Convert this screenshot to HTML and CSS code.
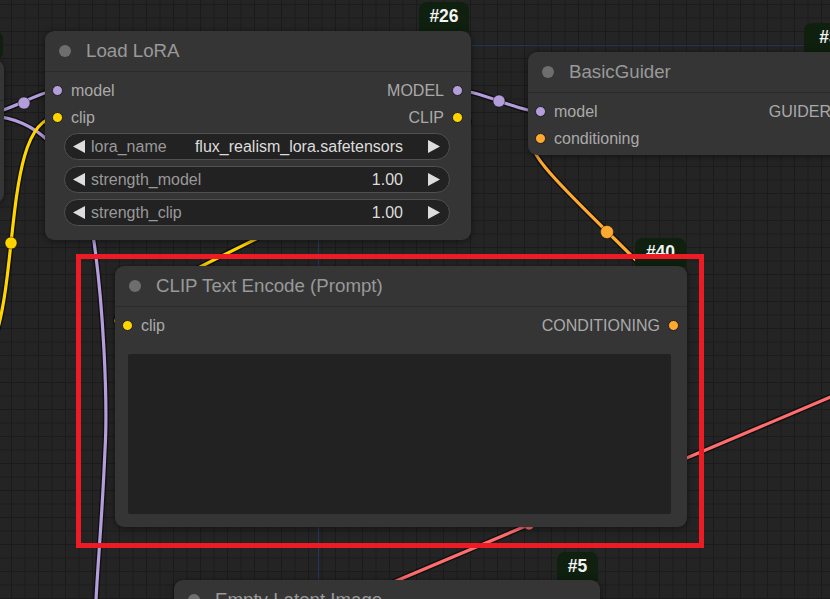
FILE: index.html
```html
<!DOCTYPE html>
<html lang="en">
<head>
    <meta charset="UTF-8">
    <meta name="viewport" content="width=device-width, initial-scale=1.0">
    <title>Workflow canvas</title>
    <link rel="stylesheet" href="styles.css">
</head>
<body>

<div class="canvas">

    <!-- links sit under the nodes -->
    <svg class="links" width="830" height="599" viewBox="0 0 830 599">
        <defs>
            <path id="l-model-in" d="M -10 113 C 7 113, 41 90, 58 90"/>
            <path id="l-model-down" d="M -10 116 C 40 118, 80 160, 93 235 C 103 300, 108 400, 105 450 C 102 520, 98 560, 96 600"/>
            <path id="l-model-guider" d="M 457 90 C 479 90, 519 112, 541 112"/>
            <path id="l-clip-in" d="M -36 369 C 31 369, -9 117, 58 117"/>
            <path id="l-clip-enc" d="M 457 117 C 554 117, 31 325, 128 325"/>
            <path id="l-cond" d="M 674 325 C 731 325, 484 139, 541 139"/>
            <path id="l-vae" d="M 845 391 L 370 592"/>
        </defs>

        <line class="group-edge" x1="470" y1="45.5" x2="806" y2="45.5"/>
        <line class="group-edge" x1="318.5" y1="238" x2="318.5" y2="582"/>

        <g class="link-shadow">
            <use href="#l-model-in"/>
            <use href="#l-model-down"/>
            <use href="#l-model-guider"/>
            <use href="#l-clip-in"/>
            <use href="#l-clip-enc"/>
            <use href="#l-cond"/>
            <use href="#l-vae"/>
        </g>
        <g class="link model">
            <use href="#l-model-in"/>
            <use href="#l-model-down"/>
            <use href="#l-model-guider"/>
        </g>
        <g class="link clip">
            <use href="#l-clip-in"/>
            <use href="#l-clip-enc"/>
        </g>
        <g class="link cond"><use href="#l-cond"/></g>
        <g class="link vae"><use href="#l-vae"/></g>

        <circle class="mid model" cx="24" cy="103" r="6"/>
        <circle class="mid model" cx="499" cy="101" r="6"/>
        <circle class="mid clip" cx="11" cy="243" r="6"/>
        <circle class="mid cond" cx="607" cy="232" r="6.5"/>
        <circle class="mid vae" cx="529" cy="525" r="5"/>
    </svg>

    <!-- node cut off on the left edge -->
    <div class="badge badge-left"></div>
    <div class="node node-left">
        <div class="node-title"></div>
    </div>

    <div class="badge badge-26">#26</div>
    <div class="node node-lora">
        <div class="node-title"><span class="title-dot"></span>Load LoRA</div>
        <div class="slots">
            <div class="slot-row">
                <span class="slot"><i class="dot model"></i>model</span>
                <span class="slot">MODEL<i class="dot model"></i></span>
            </div>
            <div class="slot-row">
                <span class="slot"><i class="dot clip"></i>clip</span>
                <span class="slot">CLIP<i class="dot clip"></i></span>
            </div>
        </div>
        <div class="widgets">
            <div class="widget">
                <svg class="arrow" width="12" height="13" viewBox="0 0 12 13"><polygon points="12,0 12,13 0,6.5"/></svg>
                <span class="w-label">lora_name</span>
                <span class="w-value">flux_realism_lora.safetensors</span>
                <svg class="arrow" width="12" height="13" viewBox="0 0 12 13"><polygon points="0,0 0,13 12,6.5"/></svg>
            </div>
            <div class="widget">
                <svg class="arrow" width="12" height="13" viewBox="0 0 12 13"><polygon points="12,0 12,13 0,6.5"/></svg>
                <span class="w-label">strength_model</span>
                <span class="w-value">1.00</span>
                <svg class="arrow" width="12" height="13" viewBox="0 0 12 13"><polygon points="0,0 0,13 12,6.5"/></svg>
            </div>
            <div class="widget">
                <svg class="arrow" width="12" height="13" viewBox="0 0 12 13"><polygon points="12,0 12,13 0,6.5"/></svg>
                <span class="w-label">strength_clip</span>
                <span class="w-value">1.00</span>
                <svg class="arrow" width="12" height="13" viewBox="0 0 12 13"><polygon points="0,0 0,13 12,6.5"/></svg>
            </div>
        </div>
    </div>

    <div class="badge badge-3">#3</div>
    <div class="node node-guider">
        <div class="node-title"><span class="title-dot"></span>BasicGuider</div>
        <div class="slots">
            <div class="slot-row">
                <span class="slot"><i class="dot model"></i>model</span>
                <span class="slot">GUIDER<i class="dot guider"></i></span>
            </div>
            <div class="slot-row">
                <span class="slot"><i class="dot cond"></i>conditioning</span>
            </div>
        </div>
    </div>

    <div class="badge badge-40">#40</div>
    <div class="node node-clip">
        <div class="node-title"><span class="title-dot"></span>CLIP Text Encode (Prompt)</div>
        <div class="slots">
            <div class="slot-row">
                <span class="slot"><i class="dot clip"></i>clip</span>
                <span class="slot">CONDITIONING<i class="dot cond"></i></span>
            </div>
        </div>
        <div class="prompt-box"></div>
    </div>

    <div class="badge badge-5">#5</div>
    <div class="node node-latent">
        <div class="node-title"><span class="title-dot"></span>Empty Latent Image</div>
    </div>

    <div class="highlight"></div>
</div>

</body>
</html>
```

FILE: styles.css
```css
body {
    margin: 0;
    background: #232323;
    font-family: "Liberation Sans", Arial, sans-serif;
}
.canvas {
    position: relative;
    width: 830px;
    height: 599px;
    overflow: hidden;
    background-color: #242424;
    background-image:
        linear-gradient(#1b1b1b 1px, transparent 1px),
        linear-gradient(90deg, #1b1b1b 1px, transparent 1px);
    background-size: 13.5px 13.5px;
    background-position: 11px 4px;
}

/* links */
.links {
    position: absolute;
    left: 0;
    top: 0;
}
.links use {
    fill: none;
}
.link-shadow {
    stroke: rgba(0, 0, 0, 0.55);
    stroke-width: 6;
}
.link {
    stroke-width: 3.2;
}
.link.model { stroke: #b39ddb; }
.link.clip { stroke: #ffd500; }
.link.cond { stroke: #ffa931; }
.link.vae { stroke: #ff6e6e; }
.mid { stroke: rgba(0, 0, 0, 0.4); stroke-width: 1; }
.mid.model { fill: #b39ddb; }
.mid.clip { fill: #ffd500; }
.mid.cond { fill: #ffa931; }
.mid.vae { fill: #ff6e6e; }
.group-edge {
    stroke: #22385a;
    stroke-width: 1;
}

/* nodes */
.node {
    position: absolute;
    display: flex;
    flex-direction: column;
    box-sizing: border-box;
    background: #353535;
    border-radius: 9px;
    box-shadow: 0 1px 7px rgba(0, 0, 0, 0.5);
}
.node-title {
    display: flex;
    align-items: center;
    gap: 15px;
    height: 40px;
    padding-left: 14px;
    border-bottom: 1px solid #2b2b2b;
    color: #999;
    font-size: 18.7px;
    white-space: nowrap;
    flex-shrink: 0;
}
.title-dot {
    width: 12px;
    height: 12px;
    border-radius: 50%;
    background: #6e6e6e;
}
.node-left { left: -300px; top: 60px; width: 304px; height: 143px; }
.node-lora { left: 45px; top: 31px; width: 426px; height: 209px; }
.node-guider { left: 528px; top: 52px; width: 330px; height: 103px; }
.node-clip { left: 115px; top: 266px; width: 572px; height: 261px; }
.node-latent { left: 174px; top: 580px; width: 426px; height: 150px; }

.slots {
    padding-top: 5px;
}
.slot-row {
    display: flex;
    justify-content: space-between;
    align-items: center;
    height: 27px;
    padding: 0 8px 0 7px;
}
.slot {
    display: flex;
    align-items: center;
    gap: 8px;
    color: #aaa;
    font-size: 16px;
}
.dot {
    width: 11px;
    height: 11px;
    box-sizing: border-box;
    border-radius: 50%;
    border: 1px solid #1e1e1e;
}
.dot.model { background: #b39ddb; }
.dot.clip { background: #ffd500; }
.dot.cond { background: #ffa931; }
.dot.guider { background: #66ffff; }

.widgets {
    display: flex;
    flex-direction: column;
    gap: 6px;
    margin: 2px 21px 0 19px;
}
.widget {
    display: flex;
    align-items: center;
    height: 27px;
    box-sizing: border-box;
    padding: 0 9px 0 8px;
    background: #222;
    border: 1px solid #505050;
    border-radius: 14px;
    font-size: 16px;
}
.arrow {
    fill: #ddd;
    flex-shrink: 0;
}
.w-label {
    margin-left: 6px;
    color: #999;
}
.w-value {
    flex: 1;
    text-align: right;
    color: #ddd;
    margin-right: 25px;
}

.prompt-box {
    flex: 1;
    margin: 15px 16px 13px 13px;
    background: #222;
    border-radius: 2px;
}

/* id badges */
.badge {
    position: absolute;
    display: flex;
    align-items: center;
    justify-content: center;
    height: 29px;
    background: #0f200f;
    border-radius: 8px 8px 0 0;
    color: #f2f2f2;
    font-size: 17.5px;
    font-weight: bold;
}
.badge-left { left: -40px; top: 31px; width: 43px; border-radius: 8px; }
.badge-26 { left: 419px; top: 2px; width: 50px; }
.badge-3 { left: 804px; top: 23px; width: 50px; }
.badge-40 { left: 635px; top: 238px; width: 51px; }
.badge-5 { left: 557px; top: 552px; width: 41px; }

.highlight {
    position: absolute;
    left: 76px;
    top: 254px;
    width: 628px;
    height: 294px;
    box-sizing: border-box;
    border: 5px solid #ed1c24;
}
```
